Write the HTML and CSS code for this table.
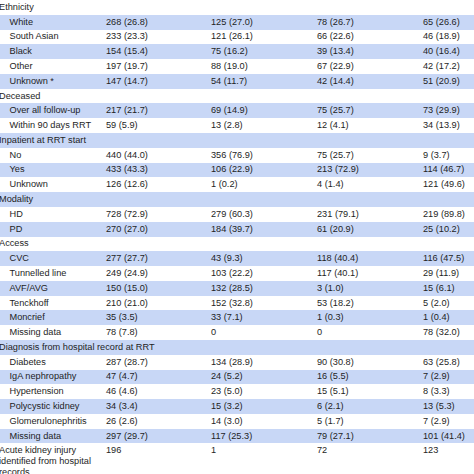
FILE: index.html
```html
<!DOCTYPE html>
<html>
<head>
<meta charset="utf-8">
<link rel="stylesheet" href="styles.css">
</head>
<body>
<div class="table">
  <div class="row head"><div class="lab">Ethnicity</div><div></div><div></div><div></div><div></div></div>
  <div class="row"><div class="lab sub">White</div><div>268 (26.8)</div><div>125 (27.0)</div><div>78 (26.7)</div><div>65 (26.6)</div></div>
  <div class="row"><div class="lab sub">South Asian</div><div>233 (23.3)</div><div>121 (26.1)</div><div>66 (22.6)</div><div>46 (18.9)</div></div>
  <div class="row"><div class="lab sub">Black</div><div>154 (15.4)</div><div>75 (16.2)</div><div>39 (13.4)</div><div>40 (16.4)</div></div>
  <div class="row"><div class="lab sub">Other</div><div>197 (19.7)</div><div>88 (19.0)</div><div>67 (22.9)</div><div>42 (17.2)</div></div>
  <div class="row"><div class="lab sub">Unknown *</div><div>147 (14.7)</div><div>54 (11.7)</div><div>42 (14.4)</div><div>51 (20.9)</div></div>
  <div class="row head"><div class="lab">Deceased</div><div></div><div></div><div></div><div></div></div>
  <div class="row"><div class="lab sub">Over all follow-up</div><div>217 (21.7)</div><div>69 (14.9)</div><div>75 (25.7)</div><div>73 (29.9)</div></div>
  <div class="row"><div class="lab sub">Within 90 days RRT</div><div>59 (5.9)</div><div>13 (2.8)</div><div>12 (4.1)</div><div>34 (13.9)</div></div>
  <div class="row head"><div class="lab">Inpatient at RRT start</div><div></div><div></div><div></div><div></div></div>
  <div class="row"><div class="lab sub">No</div><div>440 (44.0)</div><div>356 (76.9)</div><div>75 (25.7)</div><div>9 (3.7)</div></div>
  <div class="row"><div class="lab sub">Yes</div><div>433 (43.3)</div><div>106 (22.9)</div><div>213 (72.9)</div><div>114 (46.7)</div></div>
  <div class="row"><div class="lab sub">Unknown</div><div>126 (12.6)</div><div>1 (0.2)</div><div>4 (1.4)</div><div>121 (49.6)</div></div>
  <div class="row head"><div class="lab">Modality</div><div></div><div></div><div></div><div></div></div>
  <div class="row"><div class="lab sub">HD</div><div>728 (72.9)</div><div>279 (60.3)</div><div>231 (79.1)</div><div>219 (89.8)</div></div>
  <div class="row"><div class="lab sub">PD</div><div>270 (27.0)</div><div>184 (39.7)</div><div>61 (20.9)</div><div>25 (10.2)</div></div>
  <div class="row head"><div class="lab">Access</div><div></div><div></div><div></div><div></div></div>
  <div class="row"><div class="lab sub">CVC</div><div>277 (27.7)</div><div>43 (9.3)</div><div>118 (40.4)</div><div>116 (47.5)</div></div>
  <div class="row"><div class="lab sub">Tunnelled line</div><div>249 (24.9)</div><div>103 (22.2)</div><div>117 (40.1)</div><div>29 (11.9)</div></div>
  <div class="row"><div class="lab sub">AVF/AVG</div><div>150 (15.0)</div><div>132 (28.5)</div><div>3 (1.0)</div><div>15 (6.1)</div></div>
  <div class="row"><div class="lab sub">Tenckhoff</div><div>210 (21.0)</div><div>152 (32.8)</div><div>53 (18.2)</div><div>5 (2.0)</div></div>
  <div class="row"><div class="lab sub">Moncrief</div><div>35 (3.5)</div><div>33 (7.1)</div><div>1 (0.3)</div><div>1 (0.4)</div></div>
  <div class="row"><div class="lab sub">Missing data</div><div>78 (7.8)</div><div>0</div><div>0</div><div>78 (32.0)</div></div>
  <div class="row head"><div class="lab wide">Diagnosis from hospital record at RRT</div><div></div><div></div><div></div></div>
  <div class="row"><div class="lab sub">Diabetes</div><div>287 (28.7)</div><div>134 (28.9)</div><div>90 (30.8)</div><div>63 (25.8)</div></div>
  <div class="row"><div class="lab sub">IgA nephropathy</div><div>47 (4.7)</div><div>24 (5.2)</div><div>16 (5.5)</div><div>7 (2.9)</div></div>
  <div class="row"><div class="lab sub">Hypertension</div><div>46 (4.6)</div><div>23 (5.0)</div><div>15 (5.1)</div><div>8 (3.3)</div></div>
  <div class="row"><div class="lab sub">Polycystic kidney</div><div>34 (3.4)</div><div>15 (3.2)</div><div>6 (2.1)</div><div>13 (5.3)</div></div>
  <div class="row"><div class="lab sub">Glomerulonephritis</div><div>26 (2.6)</div><div>14 (3.0)</div><div>5 (1.7)</div><div>7 (2.9)</div></div>
  <div class="row"><div class="lab sub">Missing data</div><div>297 (29.7)</div><div>117 (25.3)</div><div>79 (27.1)</div><div>101 (41.4)</div></div>
  <div class="row"><div class="lab">Acute kidney injury<br>identified from hospital<br>records</div><div>196</div><div>1</div><div>72</div><div>123</div></div>
</div>
</body>
</html>
```

FILE: styles.css
```css
html, body {
  margin: 0;
  padding: 0;
  background: #ffffff;
}
body {
  width: 474px;
  height: 474px;
  overflow: hidden;
  font-family: "Liberation Sans", Arial, sans-serif;
  font-size: 9.2px;
  color: #1e1e1e;
}
.table {
  display: flex;
  flex-direction: column;
}
.row {
  display: grid;
  grid-template-columns: 106px 105px 106px 106px 51px;
  line-height: 11px;
  padding: 1.9px 0;
  background: #ffffff;
}
.row:nth-child(even) {
  background: #c8d7f6;
}
.row > div {
  white-space: nowrap;
}
.lab {
  margin-left: -1px;
}
.lab.sub {
  margin-left: 9.5px;
}
.lab.wide {
  grid-column: span 2;
}
```
